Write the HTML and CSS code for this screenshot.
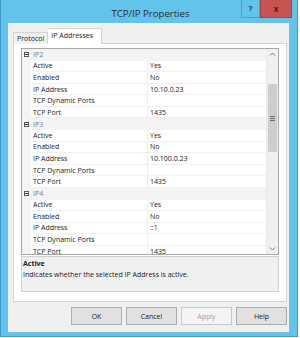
FILE: index.html
```html
<!DOCTYPE html>
<html>
<head>
<meta charset="utf-8">
<link rel="stylesheet" href="styles.css">
</head>
<body>
<div class="window">
  <div class="titlebar">
    <div></div>
    <div class="title">TCP/IP Properties</div>
    <div class="caption-btns">
      <div class="cbtn help">?</div>
      <div class="cbtn close">x</div>
    </div>
  </div>
  <div class="client">
    <div class="tabs">
      <div class="tab">Protocol</div>
      <div class="tab active">IP Addresses</div>
    </div>
    <div class="panel">
      <div class="grid">
        <div class="rows">
          <div class="row cat"><span class="gut"><span class="box"></span></span><span class="catname">IP2</span></div>
          <div class="row"><span class="gut"></span><span class="lbl">Active</span><span class="val">Yes</span></div>
          <div class="row"><span class="gut"></span><span class="lbl">Enabled</span><span class="val">No</span></div>
          <div class="row"><span class="gut"></span><span class="lbl">IP Address</span><span class="val">10.10.0.23</span></div>
          <div class="row"><span class="gut"></span><span class="lbl">TCP Dynamic Ports</span><span class="val"></span></div>
          <div class="row"><span class="gut"></span><span class="lbl">TCP Port</span><span class="val">1435</span></div>
          <div class="row cat"><span class="gut"><span class="box"></span></span><span class="catname">IP3</span></div>
          <div class="row"><span class="gut"></span><span class="lbl">Active</span><span class="val">Yes</span></div>
          <div class="row"><span class="gut"></span><span class="lbl">Enabled</span><span class="val">No</span></div>
          <div class="row"><span class="gut"></span><span class="lbl">IP Address</span><span class="val">10.100.0.23</span></div>
          <div class="row"><span class="gut"></span><span class="lbl">TCP Dynamic Ports</span><span class="val"></span></div>
          <div class="row"><span class="gut"></span><span class="lbl">TCP Port</span><span class="val">1435</span></div>
          <div class="row cat"><span class="gut"><span class="box"></span></span><span class="catname">IP4</span></div>
          <div class="row"><span class="gut"></span><span class="lbl">Active</span><span class="val">Yes</span></div>
          <div class="row"><span class="gut"></span><span class="lbl">Enabled</span><span class="val">No</span></div>
          <div class="row"><span class="gut"></span><span class="lbl">IP Address</span><span class="val">::1</span></div>
          <div class="row"><span class="gut"></span><span class="lbl">TCP Dynamic Ports</span><span class="val"></span></div>
          <div class="row"><span class="gut"></span><span class="lbl">TCP Port</span><span class="val">1435</span></div>
        </div>
        <div class="scrollbar">
          <div class="arrow">
            <svg width="7" height="5" viewBox="0 0 7 5"><path d="M1 3.5 L3.5 1 L6 3.5" fill="none" stroke="#7a7a7a" stroke-width="1"/></svg>
          </div>
          <div class="track">
            <div class="thumb">
              <svg width="5" height="5" viewBox="0 0 5 5"><path d="M0 0.5H5M0 2.5H5M0 4.5H5" stroke="#6e6e6e" stroke-width="1"/></svg>
            </div>
          </div>
          <div class="arrow">
            <svg width="7" height="5" viewBox="0 0 7 5"><path d="M1 1.5 L3.5 4 L6 1.5" fill="none" stroke="#7a7a7a" stroke-width="1"/></svg>
          </div>
        </div>
      </div>
      <div class="desc">
        <div class="desc-title">Active</div>
        <div class="desc-text">Indicates whether the selected IP Address is active.</div>
      </div>
    </div>
    <div class="buttons">
      <div class="btn">OK</div>
      <div class="btn">Cancel</div>
      <div class="btn disabled">Apply</div>
      <div class="btn">Help</div>
    </div>
  </div>
</div>
</body>
</html>
```
FILE: styles.css
```css
html, body {
  margin: 0;
  padding: 0;
  background: #ffffff;
}
body {
  width: 300px;
  height: 338px;
  overflow: hidden;
  font-family: "Open Sans", "Noto Sans", sans-serif;
  font-size: 7px;
  color: #1a1a1a;
}
.window {
  width: 298px;
  height: 337px;
  box-sizing: border-box;
  background: #62c4ea;
  border: 1px solid #3e9ccb;
  border-top: none;
  display: flex;
  flex-direction: column;
}
.titlebar {
  height: 23px;
  flex: none;
  display: grid;
  grid-template-columns: 1fr auto 1fr;
  align-items: start;
}
.title {
  font-size: 9.6px;
  color: #2b2b2b;
  line-height: 12px;
  padding-top: 8px;
  padding-left: 3px;
}
.caption-btns {
  display: flex;
  justify-content: flex-end;
  padding-right: 5px;
}
.cbtn {
  height: 18px;
  box-sizing: border-box;
  display: flex;
  align-items: center;
  justify-content: center;
  font-family: "Liberation Sans", sans-serif;
  font-weight: bold;
  font-size: 8px;
  color: #2e2e2e;
}
.cbtn.help {
  width: 19px;
  border: 1px solid #4f9ec4;
  border-top: none;
  color: #1f3c55;
}
.cbtn.close {
  width: 32px;
  background: #c75451;
  border: 1px solid #a54342;
  border-top: none;
  color: #222;
  font-size: 8.5px;
}
.client {
  flex: 1;
  margin: 0 8px 4px 7px;
  background: #f0f0f0;
  padding: 6px 2px 0 5px;
  display: flex;
  flex-direction: column;
}
.tabs {
  display: flex;
  align-items: flex-end;
  height: 15px;
  margin-bottom: -1px;
  position: relative;
  z-index: 1;
}
.tab {
  height: 12px;
  box-sizing: border-box;
  border: 1px solid #d4d4d4;
  border-bottom: none;
  background: #f0f0f0;
  padding: 0 3px 0 3px;
  line-height: 11px;
  font-size: 7px;
}
.tab.active {
  height: 16px;
  background: #ffffff;
  border-color: #d4d4d4;
  padding: 0 4px 0 3px;
  line-height: 13px;
  width: 54px;
  border-left: none;
}
.panel {
  height: 259px;
  box-sizing: border-box;
  border: 1px solid #d4d4d4;
  background: #ffffff;
  padding: 4px 7px 8px 7px;
  display: flex;
  flex-direction: column;
  gap: 1px;
}
.grid {
  height: 207px;
  flex: none;
  box-sizing: border-box;
  border: 1px solid #a8a8a8;
  display: flex;
  overflow: hidden;
}
.rows {
  flex: 1;
  overflow: hidden;
}
.row {
  height: 11.58px;
  display: flex;
  align-items: center;
  box-sizing: border-box;
}
.gut {
  width: 9px;
  flex: none;
  align-self: stretch;
  background: #f4f4f4;
  display: flex;
  align-items: center;
  justify-content: center;
}
.lbl {
  width: 117px;
  flex: none;
  align-self: stretch;
  box-sizing: border-box;
  padding-left: 2px;
  display: flex;
  align-items: center;
  border-right: 1px solid #ececec;
  border-bottom: 1px solid #f0f0f0;
}
.val {
  flex: 1;
  align-self: stretch;
  padding-left: 2px;
  display: flex;
  align-items: center;
  border-bottom: 1px solid #f0f0f0;
}
.row.cat {
  background: #f4f4f4;
}
.catname {
  padding-left: 2px;
  color: #7a7a7a;
}
.box {
  width: 5px;
  height: 5px;
  box-sizing: border-box;
  border: 1px solid #5a5a5a;
  position: relative;
  display: flex;
  align-items: center;
  justify-content: center;
  background: #fff;
}
.box::after {
  content: "";
  width: 3px;
  height: 1px;
  background: #333;
}
.scrollbar {
  width: 11px;
  flex: none;
  background: #f0f0f0;
  display: flex;
  flex-direction: column;
  border-left: 1px solid #e8e8e8;
}
.arrow {
  height: 11px;
  flex: none;
  display: flex;
  align-items: center;
  justify-content: center;
}
.track {
  flex: 1;
  padding-top: 24px;
}
.thumb {
  width: 9px;
  height: 68px;
  margin-left: 1px;
  background: #cdcdcd;
  display: flex;
  align-items: center;
  justify-content: center;
}
.desc {
  height: 36px;
  flex: none;
  box-sizing: border-box;
  border: 1px solid #d0d0d0;
  background: #f0f0f0;
  padding: 2px 0 0 1px;
}
.desc-title {
  font-weight: bold;
  line-height: 10px;
}
.desc-text {
  line-height: 11px;
}
.buttons {
  display: flex;
  justify-content: flex-end;
  gap: 4px;
  margin-top: 5px;
}
.btn {
  width: 51px;
  height: 18px;
  box-sizing: border-box;
  border: 1px solid #adadad;
  background: #e1e1e1;
  display: flex;
  align-items: center;
  justify-content: center;
  font-size: 7px;
}
.btn.disabled {
  color: #9c9c9c;
  background: #f4f4f4;
  border-color: #c8c8c8;
}
```
